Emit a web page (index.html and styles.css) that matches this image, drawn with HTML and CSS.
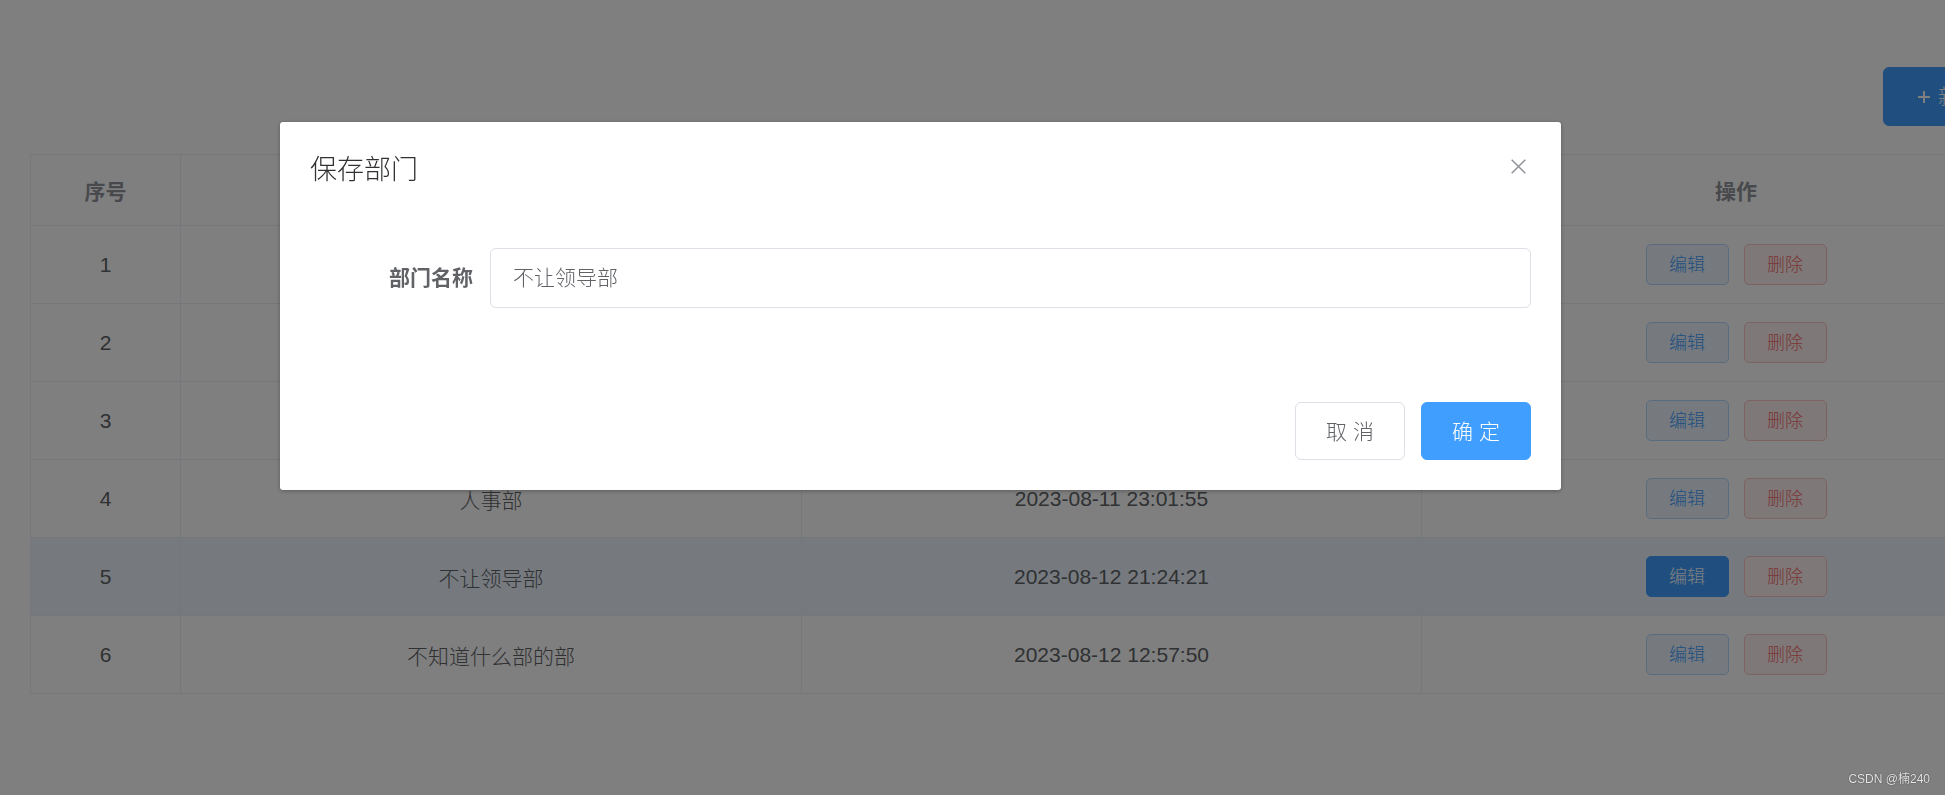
FILE: index.html
```html
<!DOCTYPE html>
<html lang="zh">
<head>
<meta charset="utf-8">
<title>部门管理</title>
<link rel="stylesheet" href="styles.css">
</head>
<body>
<div class="page">
  <div class="toolbar">
    <button class="btn btn-primary btn-new">
      <svg class="plus" viewBox="0 0 14 14" width="14" height="14"><path d="M7 1v12M1 7h12" stroke="#fff" stroke-width="2" fill="none"/></svg>
      <span class="light">新增</span>
    </button>
  </div>
  <table class="dept-table">
    <colgroup>
      <col class="c1"><col class="c2"><col class="c3"><col class="c4">
    </colgroup>
    <thead>
      <tr><th>序号</th><th>部门名称</th><th>最后操作时间</th><th>操作</th></tr>
    </thead>
    <tbody>
      <tr><td>1</td><td class="light">学工部</td><td>2023-08-09 15:38:12</td><td><div class="ops"><button class="mini mini-edit">编辑</button><button class="mini mini-del">删除</button></div></td></tr>
      <tr><td>2</td><td class="light">教研部</td><td>2023-08-09 15:38:38</td><td><div class="ops"><button class="mini mini-edit">编辑</button><button class="mini mini-del">删除</button></div></td></tr>
      <tr><td>3</td><td class="light">咨询部</td><td>2023-08-09 15:38:56</td><td><div class="ops"><button class="mini mini-edit">编辑</button><button class="mini mini-del">删除</button></div></td></tr>
      <tr><td>4</td><td class="light">人事部</td><td>2023-08-11 23:01:55</td><td><div class="ops"><button class="mini mini-edit">编辑</button><button class="mini mini-del">删除</button></div></td></tr>
      <tr class="current"><td>5</td><td class="light">不让领导部</td><td>2023-08-12 21:24:21</td><td><div class="ops"><button class="mini mini-edit focused">编辑</button><button class="mini mini-del">删除</button></div></td></tr>
      <tr><td>6</td><td class="light">不知道什么部的部</td><td>2023-08-12 12:57:50</td><td><div class="ops"><button class="mini mini-edit">编辑</button><button class="mini mini-del">删除</button></div></td></tr>
    </tbody>
  </table>
</div>

<div class="mask"></div>

<div class="dialog">
  <div class="dialog-header">
    <span class="dialog-title">保存部门</span>
    <button class="dialog-close" aria-label="关闭">
      <svg viewBox="0 0 15 15" width="15" height="15"><path d="M0.7 0.7L14.3 14.3M14.3 0.7L0.7 14.3" stroke="#909399" stroke-width="1.5" fill="none"/></svg>
    </button>
  </div>
  <div class="dialog-body">
    <div class="form-item">
      <label class="form-label">部门名称</label>
      <div class="input">不让领导部</div>
    </div>
  </div>
  <div class="dialog-footer">
    <button class="btn btn-default">取 消</button>
    <button class="btn btn-primary">确 定</button>
  </div>
</div>

<div class="watermark">CSDN @楠240</div>
</body>
</html>
```

FILE: styles.css
```css
html, body {
  margin: 0;
  padding: 0;
  width: 1945px;
  height: 795px;
  overflow: hidden;
  background: #ffffff;
}
body {
  font-family: "Liberation Sans", "Noto Sans CJK SC", sans-serif;
  color: #606266;
}
button {
  font-family: inherit;
  font-weight: 300;
  cursor: pointer;
}
.light {
  font-weight: 300;
}

.page {
  width: 2020px;
  padding-left: 30px;
}

.toolbar {
  display: flex;
  justify-content: flex-end;
  padding-top: 67px;
  padding-right: 5px;
  height: 59px;
  margin-bottom: 28px;
}

.btn {
  height: 59px;
  padding: 0 30px;
  font-size: 21px;
  border-radius: 6px;
  border: 1px solid #dcdfe6;
  background: #fff;
  color: #606266;
  display: inline-flex;
  align-items: center;
  justify-content: center;
  line-height: 1;
}
.btn-primary {
  background: #409eff;
  border-color: #409eff;
  color: #fff;
}
.btn-new {
  width: 162px;
  padding: 0 0 0 33px;
  justify-content: flex-start;
  gap: 7px;
}
.plus {
  width: 14px;
  height: 14px;
}

.dept-table {
  border-collapse: collapse;
  table-layout: fixed;
  width: 2020px;
  font-size: 21px;
}
.c1 { width: 150px; }
.c2 { width: 621px; }
.c3 { width: 620px; }
.c4 { width: 629px; }

.dept-table th,
.dept-table td {
  border: 1px solid #ebeef5;
  text-align: center;
  padding: 0 15px;
  color: #606266;
  font-weight: normal;
}
.dept-table td.light {
  font-weight: 300;
}
.dept-table th {
  height: 70px;
  color: #909399;
  font-weight: bold;
}
.dept-table td {
  height: 77px;
}
.dept-table tr.current td {
  background: #ecf5ff;
}

.ops {
  display: flex;
  justify-content: center;
  gap: 15px;
}
.mini {
  width: 83px;
  height: 41px;
  font-size: 18px;
  border-radius: 5px;
  border: 1px solid;
  padding: 0;
  line-height: 1;
}
.mini-edit {
  background: #ecf5ff;
  border-color: #b3d8ff;
  color: #409eff;
}
.mini-edit.focused {
  background: #409eff;
  border-color: #409eff;
  color: #fff;
}
.mini-del {
  background: #fef0f0;
  border-color: #fbc4c4;
  color: #f56c6c;
}

.mask {
  position: fixed;
  inset: 0;
  background: rgba(0, 0, 0, 0.5);
}

.dialog {
  position: fixed;
  left: 280px;
  top: 122px;
  width: 1281px;
  background: #fff;
  border-radius: 3px;
  box-shadow: 0 1px 4px rgba(0, 0, 0, 0.3);
}
.dialog-header {
  position: relative;
  padding: 30px 30px 15px;
}
.dialog-title {
  display: block;
  font-size: 27px;
  font-weight: 300;
  line-height: 36px;
  color: #303133;
}
.dialog-close {
  position: absolute;
  top: 37px;
  right: 35px;
  width: 15px;
  height: 15px;
  padding: 0;
  border: 0;
  background: transparent;
  display: block;
}
.dialog-close svg {
  display: block;
}
.dialog-body {
  padding: 45px 30px;
}
.form-item {
  display: flex;
  align-items: center;
  margin-bottom: 33px;
}
.form-label {
  width: 178px;
  box-sizing: border-box;
  padding-right: 15px;
  margin-right: 2px;
  text-align: right;
  font-size: 21px;
  font-weight: bold;
  color: #606266;
  line-height: 30px;
}
.input {
  flex: 1;
  height: 58px;
  border: 1px solid #dcdfe6;
  border-radius: 6px;
  padding: 0 22px;
  font-size: 21px;
  font-weight: 300;
  line-height: 58px;
  color: #606266;
}
.dialog-footer {
  display: flex;
  justify-content: flex-end;
  gap: 16px;
  padding: 16px 30px 30px;
}
.dialog-footer .btn {
  width: 110px;
  padding: 0;
  height: 58px;
}

.watermark {
  position: fixed;
  right: 15px;
  bottom: 9px;
  font-size: 12px;
  color: #e6e6e6;
  text-shadow: 0 0 1px #444, 0 0 1px #444;
}
```
